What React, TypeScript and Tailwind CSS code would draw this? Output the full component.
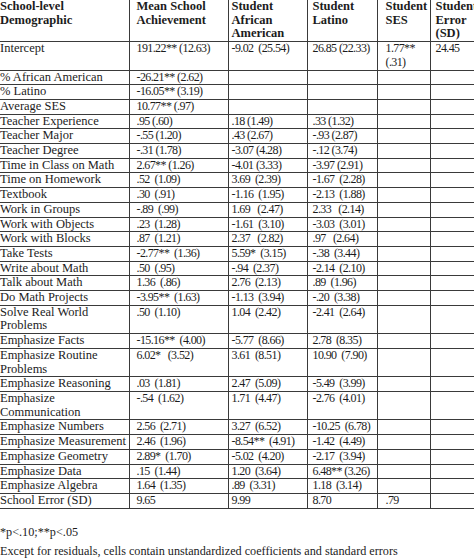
const header = [
  ["School-level", "Demographic"],
  ["Mean School", "Achievement"],
  ["Student", "African", "American"],
  ["Student", "Latino"],
  ["Student", "SES"],
  ["Student", "Error", "(SD)"],
]

const rows: string[][] = [
  ["Intercept", "191.22** (12.63)", "-9.02  (25.54)", "26.85 (22.33)", "1.77**\n(.31)", "24.45"],
  ["% African American", "-26.21** (2.62)", "", "", "", ""],
  ["% Latino", "-16.05** (3.19)", "", "", "", ""],
  ["Average SES", "10.77** (.97)", "", "", "", ""],
  ["Teacher Experience", ".95 (.60)", ".18 (1.49)", ".33 (1.32)", "", ""],
  ["Teacher Major", "-.55 (1.20)", ".43 (2.67)", "-.93 (2.87)", "", ""],
  ["Teacher Degree", "-.31 (1.78)", "-3.07 (4.28)", "-.12 (3.74)", "", ""],
  ["Time in Class on Math", "2.67** (1.26)", "-4.01 (3.33)", "-3.97 (2.91)", "", ""],
  ["Time on Homework", ".52  (1.09)", "3.69  (2.39)", "-1.67  (2.28)", "", ""],
  ["Textbook", ".30  (.91)", "-1.16  (1.95)", "-2.13  (1.88)", "", ""],
  ["Work in Groups", "-.89  (.99)", "1.69   (2.47)", "2.33   (2.14)", "", ""],
  ["Work with Objects", ".23  (1.28)", "-1.61  (3.10)", "-3.03  (3.01)", "", ""],
  ["Work with Blocks", ".87  (1.21)", "2.37   (2.82)", ".97   (2.64)", "", ""],
  ["Take Tests", "-2.77**  (1.36)", "5.59*  (3.15)", "-.38  (3.44)", "", ""],
  ["Write about Math", ".50  (.95)", "-.94  (2.37)", "-2.14  (2.10)", "", ""],
  ["Talk about Math", "1.36  (.86)", "2.76  (2.13)", ".89  (1.96)", "", ""],
  ["Do Math Projects", "-3.95**  (1.63)", "-1.13  (3.94)", "-.20  (3.38)", "", ""],
  ["Solve Real World\nProblems", ".50  (1.10)", "1.04  (2.42)", "-2.41  (2.64)", "", ""],
  ["Emphasize Facts", "-15.16**  (4.00)", "-5.77  (8.66)", "2.78  (8.35)", "", ""],
  ["Emphasize Routine\nProblems", "6.02*   (3.52)", "3.61  (8.51)", "10.90  (7.90)", "", ""],
  ["Emphasize Reasoning", ".03  (1.81)", "2.47  (5.09)", "-5.49  (3.99)", "", ""],
  ["Emphasize\nCommunication", "-.54  (1.62)", "1.71  (4.47)", "-2.76  (4.01)", "", ""],
  ["Emphasize Numbers", "2.56  (2.71)", "3.27  (6.52)", "-10.25  (6.78)", "", ""],
  ["Emphasize Measurement", "2.46  (1.96)", "-8.54**  (4.91)", "-1.42  (4.49)", "", ""],
  ["Emphasize Geometry", "2.89*  (1.70)", "-5.02  (4.20)", "-2.17  (3.94)", "", ""],
  ["Emphasize Data", ".15  (1.44)", "1.20  (3.64)", "6.48** (3.26)", "", ""],
  ["Emphasize Algebra", "1.64  (1.35)", ".89  (3.31)", "1.18  (3.14)", "", ""],
  ["School Error (SD)", "9.65", "9.99", "8.70", ".79", ""],
]

// left padding per column, read off the scan
const pad = ["pl-0", "pl-[7px]", "pl-[3px]", "pl-[5px]", "pl-[8px]", "pl-[5px]"]

export default function App() {
  return (
    <div
      className="w-[474px] h-[559px] overflow-hidden bg-white text-[#1c1c1c] text-[12.5px] leading-[13.7px]"
      style={{ fontFamily: '"Liberation Serif", "Times New Roman", serif' }}
    >
      <table className="table-fixed border-collapse w-[490px]">
        <colgroup>
          <col className="w-[129px]" />
          <col className="w-[99px]" />
          <col className="w-[79px]" />
          <col className="w-[70px]" />
          <col className="w-[53px]" />
          <col className="w-[60px]" />
        </colgroup>
        <thead>
          <tr>
            {header.map((lines, i) => (
              <th
                key={i}
                className={`border border-t-0 border-[#3a3a3a] ${i === 0 ? "border-l-0" : ""} ${pad[i]} pr-[2px] text-left align-top font-bold whitespace-nowrap`}
              >
                {lines.map((l, j) => (
                  <div key={j}>{l}</div>
                ))}
              </th>
            ))}
          </tr>
        </thead>
        <tbody>
          {rows.map((row, r) => (
            <tr key={r}>
              {row.map((cell, i) => (
                <td
                  key={i}
                  className={`border border-[#3a3a3a] ${i === 0 ? "border-l-0" : "text-[12px] tracking-[-0.6px]"} ${pad[i]} pr-[2px] align-top whitespace-pre`}
                >
                  {cell}
                </td>
              ))}
            </tr>
          ))}
        </tbody>
      </table>

      {/* Footnotes */}
      <div className="mt-[17px] text-[12.2px]">*p&lt;.10;**p&lt;.05</div>
      <div className="mt-[6px] text-[12.2px] whitespace-nowrap">
        Except for residuals, cells contain unstandardized coefficients and standard errors
      </div>
    </div>
  )
}
